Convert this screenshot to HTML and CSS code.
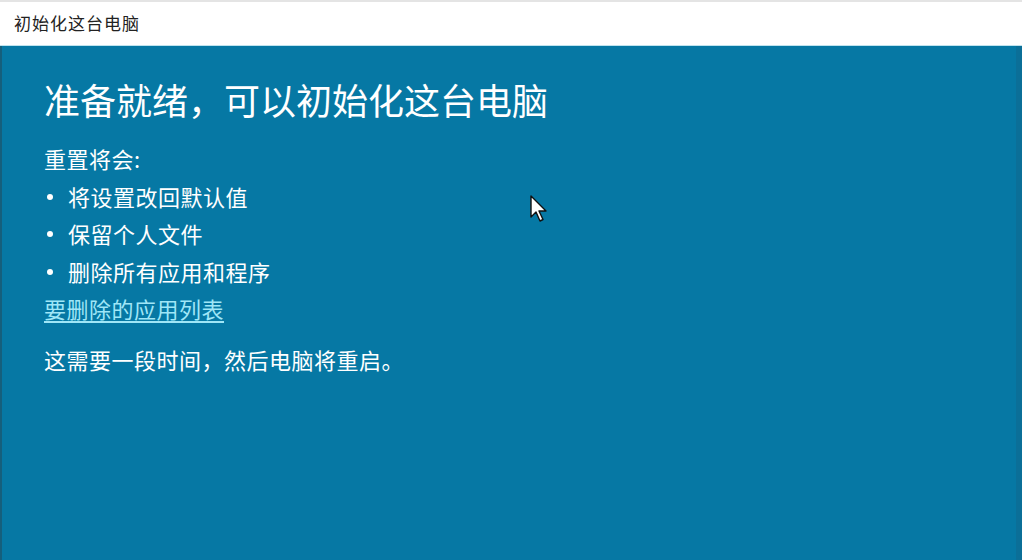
FILE: index.html
```html
<!DOCTYPE html>
<html lang="zh-CN">
<head>
<meta charset="utf-8">
<title>初始化这台电脑</title>
<link rel="stylesheet" href="styles.css">
</head>
<body>
<div class="window">
  <div class="titlebar">初始化这台电脑</div>
  <div class="content">
    <h1 class="heading">准备就绪，可以初始化这台电脑</h1>
    <p class="label">重置将会:</p>
    <ul class="list">
      <li>将设置改回默认值</li>
      <li>保留个人文件</li>
      <li>删除所有应用和程序</li>
    </ul>
    <a class="link" href="#">要删除的应用列表</a>
    <p class="note">这需要一段时间，然后电脑将重启。</p>
    <svg class="cursor" width="20" height="30" viewBox="0 0 20 30">
      <path d="M1 1 L1 22 L6 17 L10 26 L13 24.5 L9 16 L16 16 Z" fill="#fff" stroke="#111" stroke-width="1.4" stroke-linejoin="round"/>
    </svg>
  </div>
</div>
</body>
</html>
```
FILE: styles.css
```css
html, body {
  margin: 0;
  padding: 0;
  width: 1022px;
  height: 560px;
  overflow: hidden;
  background: #fff;
}
.window {
  width: 1022px;
  height: 560px;
  display: flex;
  flex-direction: column;
  font-family: "Noto Sans CJK SC", "Noto Sans", sans-serif;
  border-top: 2px solid #e4e4e4;
  box-sizing: border-box;
}
.titlebar {
  height: 44px;
  box-sizing: border-box;
  padding: 8px 0 0 14px;
  font-size: 17px;
  letter-spacing: 1px;
  color: #222;
  background: #fff;
  border-bottom: 1px solid #bfe3ee;
}
.content {
  flex: 1;
  position: relative;
  background: #0678a4;
  border-left: 2px solid #155f7c;
  border-right: 6px solid #0b6f98;
  padding: 27px 0 0 42px;
  color: #fff;
}
.heading {
  margin: 0;
  font-size: 36px;
  font-weight: 400;
  line-height: 52px;
  letter-spacing: 0;
}
.label,
.list li,
.link,
.note {
  font-size: 22px;
  letter-spacing: 0.5px;
  line-height: 28px;
}
.label {
  margin: 19px 0 0 0;
}
.list {
  list-style: none;
  margin: 0;
  padding: 0;
}
.list li {
  margin-top: 9.5px;
  padding-left: 24px;
  position: relative;
}
.list li::before {
  content: "";
  position: absolute;
  left: 3px;
  top: 12px;
  width: 6px;
  height: 6px;
  border-radius: 50%;
  background: #fff;
}
.link {
  display: inline-block;
  margin-top: 9px;
  color: #9fe6f7;
  text-decoration: underline;
  text-underline-offset: 3px;
}
.note {
  margin: 22px 0 0 0;
}
.cursor {
  position: absolute;
  left: 528px;
  top: 149px;
}
```
